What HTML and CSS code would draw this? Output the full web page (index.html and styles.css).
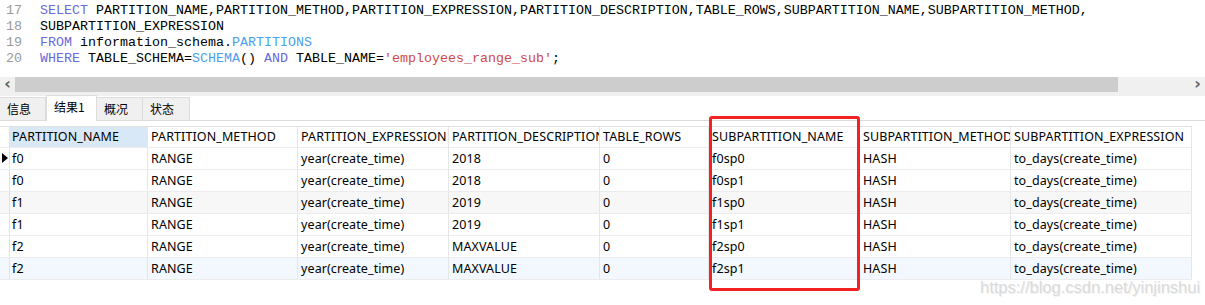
FILE: index.html
```html
<!DOCTYPE html>
<html lang="zh">
<head>
    <meta charset="UTF-8">
    <title>PARTITIONS</title>
    <link rel="stylesheet" href="styles.css">
</head>
<body>
    <!-- Editor SQL -->
    <div class="editor">
        <div class="line"><span class="ln">17</span><span class="code"><span class="kw">SELECT</span> PARTITION_NAME,PARTITION_METHOD,PARTITION_EXPRESSION,PARTITION_DESCRIPTION,TABLE_ROWS,SUBPARTITION_NAME,SUBPARTITION_METHOD,</span></div>
        <div class="line"><span class="ln">18</span><span class="code">SUBPARTITION_EXPRESSION</span></div>
        <div class="line"><span class="ln">19</span><span class="code"><span class="kw">FROM</span> information_schema.<span class="fn">PARTITIONS</span></span></div>
        <div class="line"><span class="ln">20</span><span class="code"><span class="kw">WHERE</span> TABLE_SCHEMA=<span class="fn">SCHEMA</span>() <span class="kw">AND</span> TABLE_NAME=<span class="str">'employees_range_sub'</span>;</span></div>
    </div>

    <div class="hscroll">
        <span class="arrow">&#8249;</span>
        <div class="thumb"></div>
        <div class="track"></div>
        <span class="arrow">&#8250;</span>
    </div>

    <div class="tabs">
        <div class="tab">信息</div>
        <div class="tab active">结果1</div>
        <div class="tab">概况</div>
        <div class="tab">状态</div>
    </div>

    <div class="grid">
        <div class="row head">
            <div class="ind"></div>
            <div class="cell c1 sorted">PARTITION_NAME</div>
            <div class="cell c2">PARTITION_METHOD</div>
            <div class="cell c3">PARTITION_EXPRESSION</div>
            <div class="cell c4">PARTITION_DESCRIPTION</div>
            <div class="cell c5">TABLE_ROWS</div>
            <div class="cell c6">SUBPARTITION_NAME</div>
            <div class="cell c7">SUBPARTITION_METHOD</div>
            <div class="cell c8">SUBPARTITION_EXPRESSION</div>
        </div>
        <div class="row">
            <div class="ind"><span class="pointer"></span></div>
            <div class="cell c1">f0</div><div class="cell c2">RANGE</div><div class="cell c3">year(create_time)</div><div class="cell c4">2018</div><div class="cell c5">0</div><div class="cell c6">f0sp0</div><div class="cell c7">HASH</div><div class="cell c8">to_days(create_time)</div>
        </div>
        <div class="row">
            <div class="ind"></div>
            <div class="cell c1">f0</div><div class="cell c2">RANGE</div><div class="cell c3">year(create_time)</div><div class="cell c4">2018</div><div class="cell c5">0</div><div class="cell c6">f0sp1</div><div class="cell c7">HASH</div><div class="cell c8">to_days(create_time)</div>
        </div>
        <div class="row alt">
            <div class="ind"></div>
            <div class="cell c1">f1</div><div class="cell c2">RANGE</div><div class="cell c3">year(create_time)</div><div class="cell c4">2019</div><div class="cell c5">0</div><div class="cell c6">f1sp0</div><div class="cell c7">HASH</div><div class="cell c8">to_days(create_time)</div>
        </div>
        <div class="row">
            <div class="ind"></div>
            <div class="cell c1">f1</div><div class="cell c2">RANGE</div><div class="cell c3">year(create_time)</div><div class="cell c4">2019</div><div class="cell c5">0</div><div class="cell c6">f1sp1</div><div class="cell c7">HASH</div><div class="cell c8">to_days(create_time)</div>
        </div>
        <div class="row">
            <div class="ind"></div>
            <div class="cell c1">f2</div><div class="cell c2">RANGE</div><div class="cell c3">year(create_time)</div><div class="cell c4">MAXVALUE</div><div class="cell c5">0</div><div class="cell c6">f2sp0</div><div class="cell c7">HASH</div><div class="cell c8">to_days(create_time)</div>
        </div>
        <div class="row hover">
            <div class="ind"></div>
            <div class="cell c1">f2</div><div class="cell c2">RANGE</div><div class="cell c3">year(create_time)</div><div class="cell c4">MAXVALUE</div><div class="cell c5">0</div><div class="cell c6">f2sp1</div><div class="cell c7">HASH</div><div class="cell c8">to_days(create_time)</div>
        </div>
    </div>

    <!-- Marca roja y marca de agua -->
    <div class="mark"></div>
    <div class="watermark">https://blog.csdn.net/yinjinshui</div>
</body>
</html>
```

FILE: styles.css
```css
/* General */
body {
    margin: 0;
    background: #fff;
    font-family: 'Noto Sans', 'Noto Sans CJK SC', sans-serif;
    font-size: 12px;
    color: #000;
    width: 1205px;
    height: 305px;
    overflow: hidden;
    position: relative;
}

/* Editor */
.editor {
    height: 74px;
    padding-top: 3px;
    font-family: 'Liberation Mono', monospace;
    font-size: 13.33px;
}

.line {
    display: flex;
    height: 16px;
    line-height: 16px;
    white-space: pre;
}

.ln {
    width: 34px;
    padding-left: 6px;
    color: #9a9a9a;
}

.kw {
    color: #6a6ae0;
}

.fn {
    color: #4a9ff0;
}

.str {
    color: #d04848;
}

/* Barra de desplazamiento */
.hscroll {
    display: flex;
    align-items: flex-start;
    height: 19px;
    background: #f0f0f0;
}

.hscroll .arrow {
    width: 15px;
    height: 15px;
    line-height: 14px;
    text-align: center;
    color: #606060;
    font-size: 16px;
    font-family: 'DejaVu Sans', sans-serif;
    font-weight: bold;
}

.hscroll .thumb {
    width: 1103px;
    height: 15px;
    background: #cdcdcd;
}

.hscroll .track {
    flex: 1;
}

/* Pestañas */
.tabs {
    display: flex;
    align-items: flex-end;
    height: 24px;
    border-bottom: 1px solid #dcdcdc;
    font-family: 'Noto Sans CJK SC', sans-serif;
}

.tab {
    height: 23px;
    line-height: 22px;
    padding: 0 7px;
    background: #f0f0f0;
    border: 1px solid #dcdcdc;
    border-bottom: none;
    border-left: none;
    box-sizing: border-box;
}

.tab:first-child {
    width: 46px;
}

.tab.active {
    background: #fff;
    height: 26px;
    line-height: 21px;
    width: 51px;
    border-left: 1px solid #dcdcdc;
    margin-bottom: -1px;
}

.tab:nth-child(3) {
    width: 46px;
}

.tab:nth-child(4) {
    width: 47px;
}

/* Rejilla de resultados */
.grid {
    margin-top: 5px;
    width: 1192px;
    font-size: 12.5px;
    letter-spacing: 0.1px;
}

.row {
    display: flex;
    height: 22px;
    border-bottom: 1px solid #ececec;
    box-sizing: border-box;
    line-height: 21px;
}

.row.head {
    border-top: 1px solid #e2e2e2;
    line-height: 20px;
}

.row.alt {
    background: #f7f7f7;
}

.row.hover {
    background: #f2f8fd;
}

.ind {
    width: 10px;
    flex: none;
    border-right: 1px solid #e2e2e2;
    box-sizing: border-box;
    position: relative;
}

.pointer {
    position: absolute;
    left: 2px;
    top: 5px;
    border-left: 6px solid #000;
    border-top: 5px solid transparent;
    border-bottom: 5px solid transparent;
}

.cell {
    flex: none;
    box-sizing: border-box;
    padding-left: 3px;
    border-right: 1px solid #e6e6e6;
    overflow: hidden;
    white-space: nowrap;
}

.cell.c1 {
    padding-left: 2px;
}

.cell.sorted {
    background: #d9e8f7;
}

.c1 { width: 138px; }
.c2 { width: 150px; }
.c3 { width: 151px; }
.c4 { width: 151px; }
.c5 { width: 109px; }
.c6 { width: 151px; }
.c7 { width: 151px; }
.c8 { width: 181px; }

/* Marca roja */
.mark {
    position: absolute;
    left: 709px;
    top: 116px;
    width: 151px;
    height: 175px;
    border: 3px solid #f22222;
    border-radius: 3px;
    box-sizing: border-box;
}

.watermark {
    position: absolute;
    left: 980px;
    top: 278px;
    font-family: 'Liberation Sans', sans-serif;
    font-size: 16.5px;
    color: rgba(205, 205, 205, 0.7);
    text-shadow: 1px 1px 0 rgba(235, 235, 235, 0.7);
}
```
